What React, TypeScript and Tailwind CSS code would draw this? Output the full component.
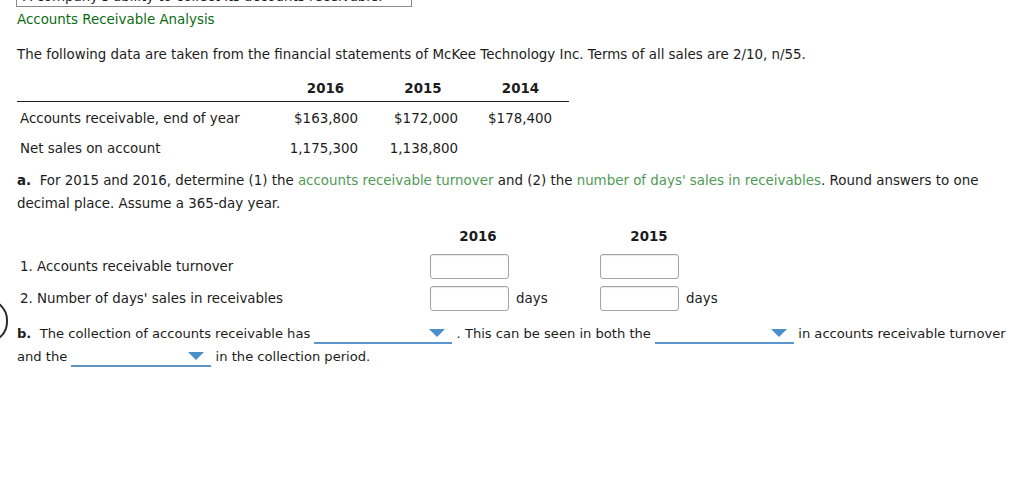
import React from 'react';

const font = { fontFamily: '"DejaVu Sans", Verdana, sans-serif' };

function Dropdown({ width }: { width: string }) {
  return (
    <span className={`relative top-[6px] inline-block align-baseline h-[16px] border-b-2 border-[#5b95c9] ${width}`}>
      <svg className="absolute right-[7px] top-[1px]" width="16" height="8" viewBox="0 0 16 8">
        <polygon points="0,0 16,0 8,8" fill="#4a8fc9" />
      </svg>
    </span>
  );
}

function AnswerBox() {
  return <span className="inline-block w-[79px] h-[25px] border border-[#a3a3a3] rounded-[3px] bg-white shadow-[inset_0_1px_1px_rgba(0,0,0,0.08)]" />;
}

export default function App() {
  const linkGreen = 'text-[#4f9a54]';
  return (
    <div className="relative w-[1024px] h-[488px] bg-white overflow-hidden text-[13.4px] leading-[16px] text-[#1c1c1c]" style={font}>
      {/* 左側の丸い枠の一部 */}
      <div className="absolute -left-[34px] top-[299px] w-[42px] h-[44px] rounded-full border-2 border-[#2a2a2a]" />

      <div className="pl-[17px]">
        {/* 上部の見出しボックス（一部のみ見える） */}
        <div className="-mt-[13px] ml-[-1px] w-[396px] h-[20px] border border-[#8a8a8a] px-[6px] leading-[17px] overflow-hidden whitespace-nowrap">
          A company's ability to collect its accounts receivable.
        </div>
        <div className="mt-[5px] text-[#0b6b12]">Accounts Receivable Analysis</div>

        <p className="mt-[19px]">
          The following data are taken from the financial statements of McKee Technology Inc. Terms of all sales are 2/10, n/55.
        </p>

        {/* データ表 */}
        <div className="mt-[18px] w-[552px]">
          <div className="flex pb-[4px] border-b border-[#222] font-bold">
            <div className="w-[260px]" />
            <div className="w-[97px] text-center">2016</div>
            <div className="w-[98px] text-center">2015</div>
            <div className="w-[97px] text-center">2014</div>
          </div>
          <div className="flex mt-[9px]">
            <div className="w-[260px] pl-[3px]">Accounts receivable, end of year</div>
            <div className="w-[97px] text-right pr-[16px]">$163,800</div>
            <div className="w-[98px] text-right pr-[14px]">$172,000</div>
            <div className="w-[97px] text-right pr-[17px]">$178,400</div>
          </div>
          <div className="flex mt-[14px]">
            <div className="w-[260px] pl-[3px]">Net sales on account</div>
            <div className="w-[97px] text-right pr-[16px]">1,175,300</div>
            <div className="w-[98px] text-right pr-[14px]">1,138,800</div>
            <div className="w-[97px]" />
          </div>
        </div>

        <p className="mt-[12px] leading-[23px] w-[990px]">
          <b>a.</b>&nbsp; For 2015 and 2016, determine (1) the <span className={linkGreen}>accounts receivable turnover</span> and (2) the{' '}
          <span className={linkGreen}>number of days' sales in receivables</span>. Round answers to one decimal place. Assume a 365-day year.
        </p>

        {/* 回答欄 */}
        <div className="mt-[14px] flex font-bold">
          <div className="w-[413px]" />
          <div className="w-[96px] text-center">2016</div>
          <div className="w-[74px]" />
          <div className="w-[98px] text-center">2015</div>
        </div>
        <div className="mt-[9px] flex items-center">
          <div className="w-[413px] pl-[3px]">1. Accounts receivable turnover</div>
          <div className="w-[170px] flex"><AnswerBox /></div>
          <div className="w-[170px] flex"><AnswerBox /></div>
        </div>
        <div className="mt-[7px] flex items-center">
          <div className="w-[413px] pl-[3px]">2. Number of days' sales in receivables</div>
          <div className="w-[170px] flex items-center gap-[7px]"><AnswerBox /><span>days</span></div>
          <div className="w-[170px] flex items-center gap-[7px]"><AnswerBox /><span>days</span></div>
        </div>

        <p className="mt-[11px] text-[13.1px] leading-[23px] w-[1000px] whitespace-nowrap">
          <b>b.</b>&nbsp; The collection of accounts receivable has <Dropdown width="w-[138px]" /> . This can be seen in both the{' '}
          <Dropdown width="w-[139px]" /> in accounts receivable turnover
          <br />
          and the <Dropdown width="w-[140px]" /> in the collection period.
        </p>
      </div>
    </div>
  );
}
